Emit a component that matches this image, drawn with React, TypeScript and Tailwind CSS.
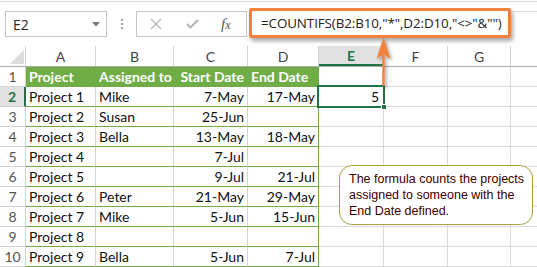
import type { ReactNode } from "react";

const CALIBRI = "font-['Lato','Noto_Sans',sans-serif]";
const SEGOE = "font-['Open_Sans','Noto_Sans',sans-serif]";

// column widths include the 1px right gridline
const COLUMNS = [
  { key: "A", width: "w-[70px]" },
  { key: "B", width: "w-[78px]" },
  { key: "C", width: "w-[74px]" },
  { key: "D", width: "w-[71px]" },
  { key: "E", width: "w-[65px]" },
  { key: "F", width: "w-[64px]" },
  { key: "G", width: "w-[63px]" },
];

type Row = [string, string, string, string];

const ROWS: Row[] = [
  ["Project", "Assigned to", "Start Date", "End Date"],
  ["Project 1", "Mike", "7-May", "17-May"],
  ["Project 2", "Susan", "25-Jun", ""],
  ["Project 3", "Bella", "13-May", "18-May"],
  ["Project 4", "", "7-Jul", ""],
  ["Project 5", "", "9-Jul", "21-Jul"],
  ["Project 6", "Peter", "21-May", "29-May"],
  ["Project 7", "Mike", "5-Jun", "15-Jun"],
  ["Project 8", "", "", ""],
  ["Project 9", "Bella", "5-Jun", "7-Jul"],
];

function FormulaBar() {
  return (
    <div className="h-[46px] pt-px">
      <div className="flex items-start border-t border-[#d6d6d6] pt-[9px]">
        <div className="ml-[5px] flex h-[26px] w-[102px] items-center justify-between border border-[#c6c6c6] pl-[7px] pr-[6px]">
          <span className={`${SEGOE} text-[14px] text-[#262626]`}>E2</span>
          <svg width="8" height="5" viewBox="0 0 8 5">
            <path d="M0 0 L8 0 L4 4.5 Z" fill="#777" />
          </svg>
        </div>
        <div className="ml-[14px] mt-[8px] flex flex-col gap-[2px]">
          <span className="h-[2px] w-[2px] bg-[#9a9a9a]" />
          <span className="h-[2px] w-[2px] bg-[#9a9a9a]" />
          <span className="h-[2px] w-[2px] bg-[#9a9a9a]" />
        </div>
        <div className="ml-[13px] flex h-[26px] w-[111px] items-center border border-[#c6c6c6]">
          <svg className="ml-[13px]" width="12" height="12" viewBox="0 0 12 12">
            <path d="M1 1 L11 11 M11 1 L1 11" stroke="#b4b4b4" strokeWidth="1.2" />
          </svg>
          <svg className="ml-[24px]" width="13" height="10" viewBox="0 0 13 10">
            <path d="M1 5 L4.5 8.5 L12 1" stroke="#b4b4b4" strokeWidth="2" fill="none" />
          </svg>
          <span className="ml-[22px] font-['Liberation_Serif',serif] text-[15px] italic text-[#555]">
            f<span className="text-[12px]">x</span>
          </span>
        </div>
        <div className="-mt-[3px] ml-[2px] flex h-[30px] w-[262px] items-center rounded-[2px] border-[3px] border-[#f0813f] pl-[9px] shadow-[2px_3px_4px_rgba(0,0,0,0.35)]">
          <span className={`${SEGOE} text-[13.4px] tracking-[-0.1px] text-[#222]`}>
            =COUNTIFS(B2:B10,"*",D2:D10,"&lt;&gt;"&amp;"")
          </span>
        </div>
        <div className="h-[26px] flex-1 border-t border-[#d6d6d6]" />
      </div>
    </div>
  );
}

function ColumnHeaders() {
  return (
    <div className={`flex h-[21px] border-b border-[#ababab] ${CALIBRI} text-[14px] text-[#444]`}>
      <div className="flex w-[26px] items-end justify-end border-r border-[#d4d4d4] pb-[2px] pr-px">
        <svg width="14" height="14" viewBox="0 0 14 14">
          <path d="M14 0 L14 14 L0 14 Z" fill="#dcdcdc" />
        </svg>
      </div>
      {COLUMNS.map((col) =>
        col.key === "E" ? (
          <div
            key={col.key}
            className={`${col.width} flex items-center justify-center border-b-2 border-r border-b-[#217346] border-r-[#d4d4d4] bg-[#e1e1e1] font-bold text-[#217346]`}
          >
            {col.key}
          </div>
        ) : (
          <div key={col.key} className={`${col.width} flex items-center justify-center border-r border-[#d4d4d4]`}>
            {col.key}
          </div>
        ),
      )}
      <div className="flex-1" />
    </div>
  );
}

function Cell({ className, children }: { className: string; children?: ReactNode }) {
  return <div className={`flex items-center overflow-hidden whitespace-nowrap ${className}`}>{children}</div>;
}

function DataRow({ row, index }: { row: Row; index: number }) {
  const isHeader = index === 1;
  const isActive = index === 2;
  const dataBorder = isHeader
    ? "border-b border-r border-[#70ad47] bg-[#70ad47] font-bold text-white"
    : "border-b border-r border-b-[#70ad47] border-r-[#d4d4d4] text-[#111]";
  const lastBorder = isHeader
    ? "border-b border-r border-[#70ad47] bg-[#70ad47] font-bold text-white"
    : "border-b border-r border-[#70ad47] text-[#111]";

  return (
    <div className={`flex h-[20px] ${CALIBRI} text-[14px]`}>
      <Cell
        className={
          isActive
            ? "w-[26px] justify-center border-b border-r-2 border-b-[#d4d4d4] border-r-[#217346] bg-[#e1e1e1] font-bold text-[#217346]"
            : "w-[26px] justify-center border-b border-r border-[#d4d4d4] text-[#555]"
        }
      >
        {index}
      </Cell>
      <Cell className={`w-[70px] pl-[3px] ${dataBorder}`}>{row[0]}</Cell>
      <Cell className={`w-[78px] pl-[3px] ${dataBorder}`}>{row[1]}</Cell>
      <Cell className={`w-[74px] justify-end pr-[3px] ${dataBorder}`}>{row[2]}</Cell>
      <Cell className={`w-[71px] ${isHeader ? "pl-[3px]" : "justify-end pr-[3px]"} ${lastBorder}`}>{row[3]}</Cell>
      <Cell className="w-[65px] justify-end border-b border-r border-[#d9d9d9] pr-[4px] text-[#111]">
        {isActive ? "5" : ""}
      </Cell>
      <Cell className="w-[64px] border-b border-r border-[#d9d9d9]" />
      <Cell className="w-[63px] border-b border-r border-[#d9d9d9]" />
      <Cell className="flex-1 border-b border-[#d9d9d9]" />
    </div>
  );
}

export default function App() {
  return (
    <div className="relative h-[267px] w-[537px] overflow-hidden bg-white">
      <FormulaBar />
      <ColumnHeaders />
      {ROWS.map((row, i) => (
        <DataRow key={i} row={row} index={i + 1} />
      ))}

      {/* active cell E2 with fill handle */}
      <div className="absolute left-[317px] top-[85px] h-[23px] w-[68px] border-2 border-[#217346]" />
      <div className="absolute left-[381px] top-[104px] h-[6px] w-[6px] border border-white bg-[#217346]" />

      {/* pointer from the formula to the result */}
      <svg className="absolute left-[370px] top-[34px]" width="28" height="58" viewBox="0 0 28 58">
        <defs>
          <filter id="arrowShadow" x="-50%" y="-20%" width="200%" height="150%">
            <feDropShadow dx="2" dy="2" stdDeviation="1.5" floodColor="#000" floodOpacity="0.35" />
          </filter>
        </defs>
        <g filter="url(#arrowShadow)">
          <path d="M13.5 18 L13.5 52" stroke="#f0813f" strokeWidth="2.5" />
          <path d="M13.5 3 L20.5 25 L13.5 20 L6.5 25 Z" fill="#f0813f" />
        </g>
      </svg>

      <div className="absolute left-[339px] top-[165px] h-[60px] w-[194px] rounded-[13px] border-[1.5px] border-[#a5a23e] bg-white pl-[9px] pt-[5px]">
        <p className="font-['Liberation_Sans',Arial,sans-serif] text-[12.5px] leading-[16px] text-[#3d0000]">
          The formula counts the projects
          <br />
          assigned to someone with the
          <br />
          End Date defined.
        </p>
      </div>
    </div>
  );
}
